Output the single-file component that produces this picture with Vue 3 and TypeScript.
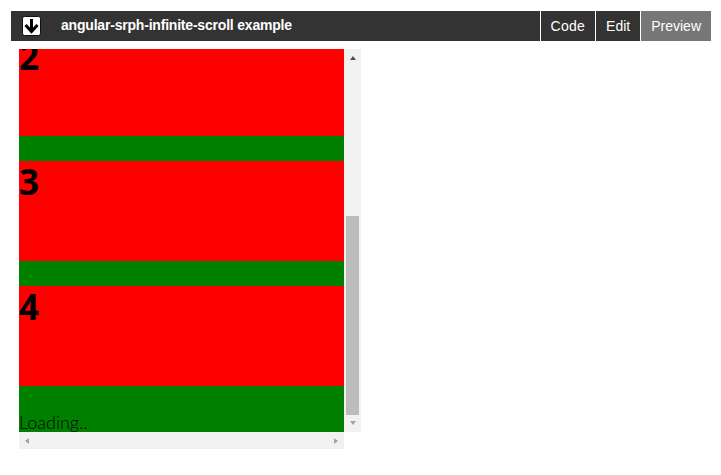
<script setup lang="ts">
const items: number[] = [2, 3, 4];
const tabs = [
  { label: 'Code', active: false },
  { label: 'Edit', active: false },
  { label: 'Preview', active: true },
];
</script>

<template>
  <div class="page">
    <header class="bar">
      <span class="logo">
        <svg width="19" height="20" viewBox="0 0 19 20">
          <rect x="0.5" y="0.5" width="18" height="19" rx="2" fill="#fff" stroke="#111" />
          <path d="M9.5 3V15M3.5 9L9.5 15.5L15.5 9" fill="none" stroke="#000" stroke-width="3" />
        </svg>
      </span>
      <span class="title">angular-srph-infinite-scroll example</span>
      <nav class="tabs">
        <a v-for="t in tabs" :key="t.label" class="tab" :class="{ active: t.active }">{{ t.label }}</a>
      </nav>
    </header>

    <div class="frame">
      <div class="viewport">
        <div class="list">
          <div v-for="n in items" :key="n" class="item">
            <div class="red"><h1 class="num">{{ n }}</h1></div>
          </div>
          <div class="loading">Loading..</div>
        </div>
      </div>
      <div class="vbar">
        <span class="arrow up"></span>
        <span class="vspace"></span>
        <span class="thumb"></span>
        <span class="arrow down"></span>
      </div>
      <div class="hbar">
        <span class="arrow left"></span>
        <span class="arrow right"></span>
      </div>
    </div>
  </div>
</template>

<style>
html, body { margin: 0; background: #fff; }
</style>

<style scoped>
.page {
  width: 721px;
  height: 475px;
  box-sizing: border-box;
  padding: 11px 10px 0 11px;
  overflow: hidden;
}
.bar {
  height: 30px;
  background: #333;
  display: flex;
  align-items: center;
  font-family: "Liberation Sans", Arial, sans-serif;
  font-size: 14px;
  color: #fff;
}
.logo {
  display: flex;
  margin-left: 11px;
  width: 19px;
  height: 20px;
}
.title {
  margin-left: 20px;
  font-weight: 700;
  letter-spacing: -0.2px;
  position: relative;
  top: -1px;
}
.tabs {
  margin-left: auto;
  display: flex;
  height: 30px;
}
.tab {
  border-left: 1px solid #fff;
  padding: 0 10px;
  line-height: 30px;
}
.tab:first-child { letter-spacing: 0.25px; }
.tab.active { background: #777; }

.frame {
  margin: 8px 0 0 8px;
  width: 342px;
  display: grid;
  grid-template-columns: 325px 17px;
  grid-template-rows: 383px 17px;
}
.viewport {
  overflow: hidden;
  background: #008000;
}
.list {
  margin-top: -13px;
  color: #000;
}
.item {
  padding-bottom: 25px;
}
.red {
  height: 100px;
  background: #f00;
}
.num {
  margin: 0;
  font-family: "Open Sans", sans-serif;
  font-size: 35px;
  line-height: 42px;
  font-weight: 700;
}
.loading {
  font-family: Lato, sans-serif;
  font-size: 18px;
  font-weight: 300;
  line-height: 22px;
}
.vbar {
  background: #f1f1f1;
  display: flex;
  flex-direction: column;
  align-items: center;
}
.vspace { flex: 1; }
.thumb {
  width: 13px;
  height: 199px;
  background: #bcbcbc;
}
.hbar {
  background: #f1f1f1;
  display: flex;
  justify-content: space-between;
  align-items: center;
  padding: 0 6px;
}
.arrow {
  display: block;
  width: 0;
  height: 0;
  border-style: solid;
  border-color: transparent;
}
.up {
  margin-top: 7px;
  border-width: 0 3.5px 4px;
  border-bottom-color: #505050;
}
.down {
  margin: 6px 0 7px;
  border-width: 4px 3.5px 0;
  border-top-color: #a3a3a3;
}
.left {
  border-width: 3.5px 4px 3.5px 0;
  border-right-color: #a3a3a3;
}
.right {
  border-width: 3.5px 0 3.5px 4px;
  border-left-color: #a3a3a3;
}
</style>
